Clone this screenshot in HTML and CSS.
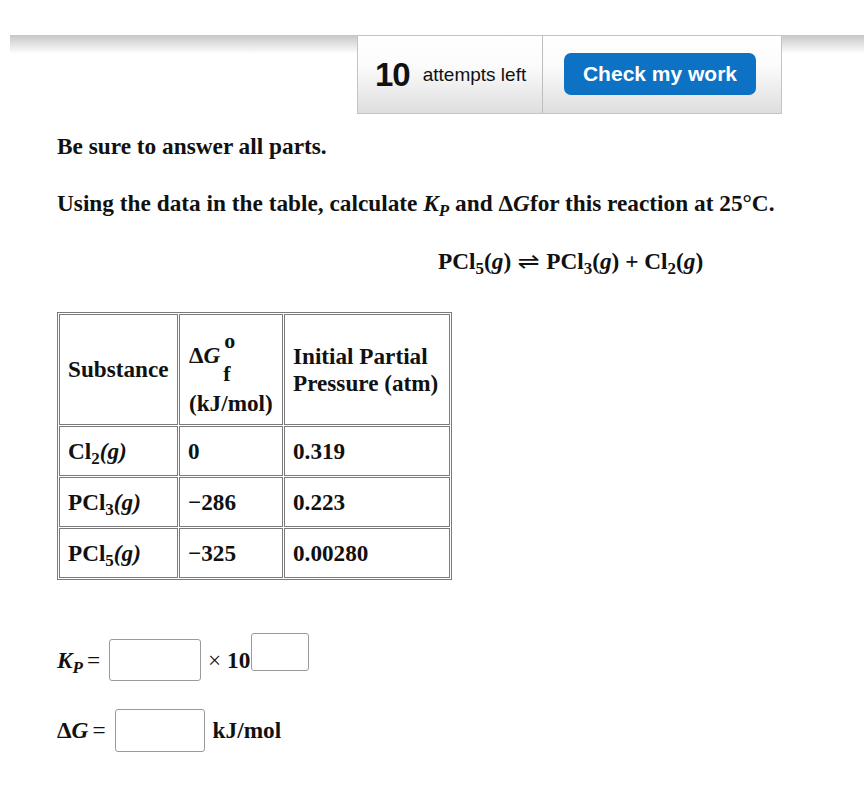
FILE: index.html
```html
<!DOCTYPE html>
<html>
<head>
<meta charset="utf-8">
<link rel="stylesheet" href="styles.css">
</head>
<body>
<div class="topbar">
  <div class="attempts-box">
    <div class="attempts"><span class="num">10</span><span class="lbl">attempts left</span></div>
    <div class="check"><button class="btn">Check my work</button></div>
  </div>
</div>

<div class="content">
  <p class="line first">Be sure to answer all parts.</p>
  <p class="line second">Using the data in the table, calculate <i>K</i><sub class="ksub"><i>P</i></sub> and Δ<i>G</i>for this reaction at 25°C.</p>
  <p class="line equation">PCl<sub class="s">5</sub>(<i>g</i>) <span class="arrow">⇌</span> PCl<sub class="s">3</sub>(<i>g</i>) + Cl<sub class="s">2</sub>(<i>g</i>)</p>

  <table class="data">
    <tr class="head">
      <td class="c1">Substance</td>
      <td class="c2"><div class="dg">Δ<i>G</i><span class="supsub"><span class="so">o</span><span class="sf">f</span></span></div><div>(kJ/mol)</div></td>
      <td class="c3">Initial Partial<br>Pressure (atm)</td>
    </tr>
    <tr class="row">
      <td>Cl<sub class="s">2</sub><i>(g)</i></td>
      <td>0</td>
      <td>0.319</td>
    </tr>
    <tr class="row">
      <td>PCl<sub class="s">3</sub><i>(g)</i></td>
      <td>−286</td>
      <td>0.223</td>
    </tr>
    <tr class="row">
      <td>PCl<sub class="s">5</sub><i>(g)</i></td>
      <td>−325</td>
      <td>0.00280</td>
    </tr>
  </table>

  <div class="answer kp">
    <span class="alabel"><i>K</i><sub class="ksub"><i>P</i></sub><span class="eq">=</span></span>
    <input class="box box1" type="text">
    <span class="times"><span class="x">×</span> 10</span>
    <input class="box exp" type="text">
  </div>

  <div class="answer dgrow">
    <span class="alabel">Δ<i>G</i><span class="eq">=</span></span>
    <input class="box box2" type="text">
    <span class="unit">kJ/mol</span>
  </div>
</div>
</body>
</html>
```

FILE: styles.css
```css
html, body {
  margin: 0;
  padding: 0;
  background: #fff;
}

body {
  font-family: "Liberation Serif", "Times New Roman", serif;
  color: #111;
}

.topbar {
  margin-top: 35px;
  margin-left: 10px;
  display: flex;
  justify-content: flex-end;
  padding-right: 82px;
  background: linear-gradient(#c6c6c6 0px, #e2e2e2 9px, #ffffff 19px, #ffffff 100%);
}

.attempts-box {
  display: flex;
  height: 77px;
  border: 1px solid #c4c4c4;
  background: linear-gradient(#ffffff 0%, #fbfbfb 40%, #dedede 100%);
  font-family: "Liberation Sans", Arial, sans-serif;
}

.attempts {
  width: 167px;
  padding-left: 17px;
  border-right: 1px solid #bdbdbd;
  display: flex;
  align-items: center;
  color: #111;
}

.num {
  font-size: 33px;
  font-weight: bold;
  letter-spacing: -1px;
  margin-right: 13px;
}

.lbl {
  font-size: 19px;
  margin-top: 0;
}

.check {
  width: 217px;
  padding-left: 21px;
  display: flex;
  align-items: center;
}

.btn {
  width: 192px;
  height: 42px;
  margin-top: -1px;
  border: none;
  border-radius: 7px;
  background: #0d72c4;
  color: #fff;
  font-family: "Liberation Sans", Arial, sans-serif;
  font-weight: bold;
  font-size: 21px;
  padding: 0;
}

.content {
  padding-left: 57px;
}

.line {
  margin: 0;
  font-size: 23.3px;
  font-weight: bold;
  line-height: 26px;
  white-space: nowrap;
}

.first {
  margin-top: 19px;
}

.second {
  margin-top: 31px;
}

.equation {
  margin-top: 32px;
  padding-left: 381px;
}

.ksub {
  font-size: 17px;
  vertical-align: -5px;
  line-height: 0;
}

.s {
  font-size: 17px;
  vertical-align: -5px;
  line-height: 0;
}

.arrow {
  font-family: "DejaVu Sans", sans-serif;
  font-weight: normal;
  font-size: 23px;
  display: inline-block;
  transform: scaleX(1.15);
  margin: 0 2px;
}

.data {
  margin-top: 38px;
  border: 1px solid #7a7a7a;
  border-spacing: 1px;
  font-size: 23.2px;
  font-weight: bold;
  line-height: 27px;
}

.data td {
  border: 1px solid #7a7a7a;
  padding: 0 8px;
  vertical-align: middle;
  white-space: nowrap;
}

.head {
  height: 111px;
}

.row {
  height: 50px;
}

.c1 {
  width: 101px;
}

.c2 {
  width: 85px;
  padding-left: 9px !important;
}

.c3 {
  width: 148px;
}

.dg {
  margin-top: 2px;
}

.supsub {
  display: inline-block;
  vertical-align: -18px;
  line-height: 33px;
  margin-left: 3px;
  font-size: 22px;
}

.so, .sf {
  display: block;
}

.so {
  margin-left: 1px;
}

.answer {
  display: flex;
  align-items: center;
  font-size: 23.3px;
  font-weight: bold;
}

.kp {
  margin-top: 59px;
}

.dgrow {
  margin-top: 28px;
}

.alabel {
  white-space: nowrap;
}

.eq {
  font-weight: normal;
  margin-left: 4px;
}

.box {
  box-sizing: border-box;
  border: 1px solid #9a9a9a;
  border-radius: 3px;
  background: #fff;
  padding: 0;
  margin: 0;
}

.box1 {
  width: 92px;
  height: 42px;
  margin-left: 9px;
}

.box2 {
  width: 90px;
  height: 43px;
  margin-left: 9px;
}

.times {
  margin-left: 7px;
}

.x {
  font-weight: normal;
}

.exp {
  width: 58px;
  height: 38px;
  align-self: flex-start;
  margin-top: -6px;
  margin-left: 1px;
}

.unit {
  margin-left: 8px;
}
```
